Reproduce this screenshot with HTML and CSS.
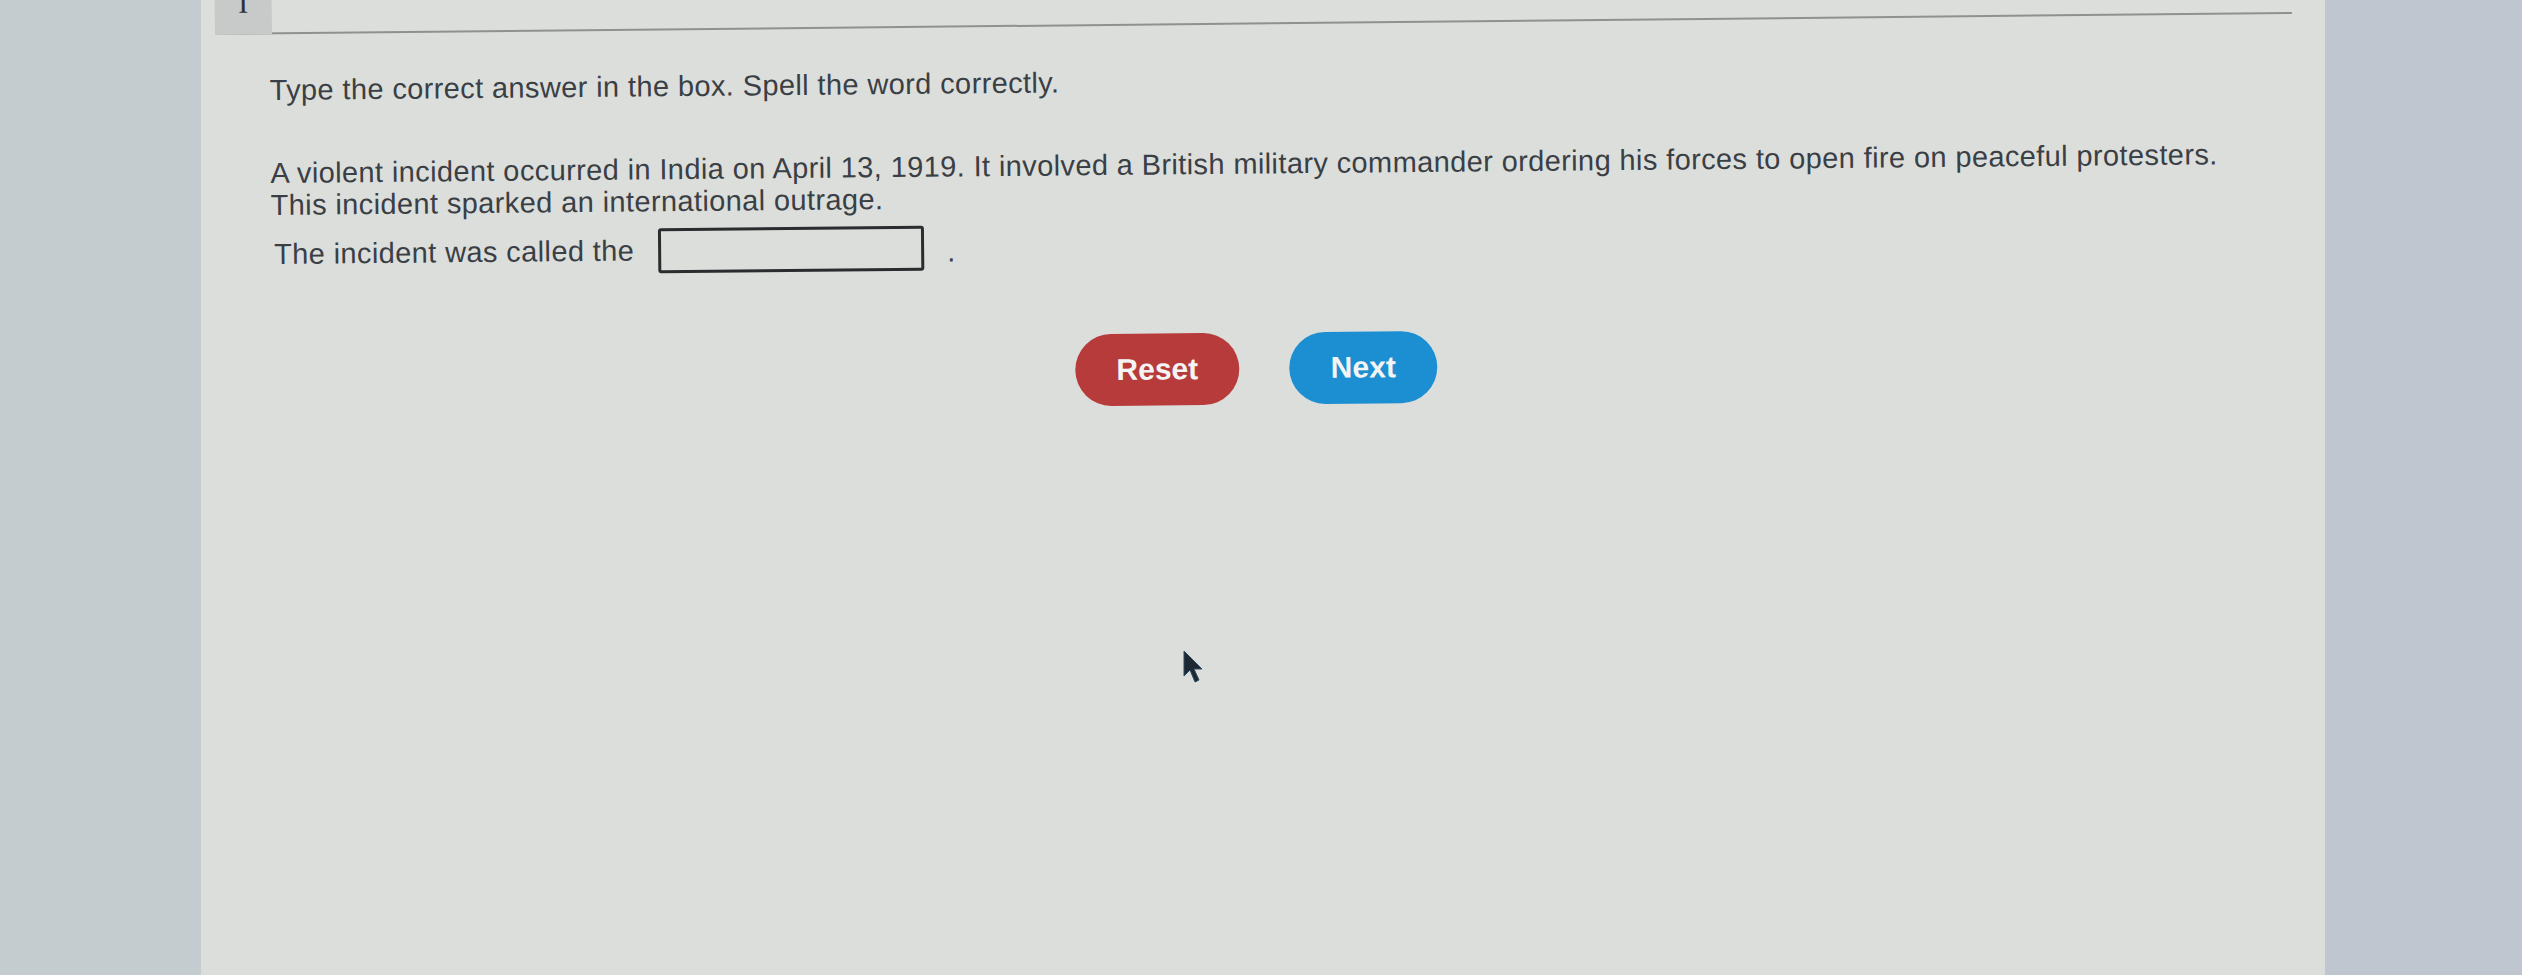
FILE: index.html
```html
<!DOCTYPE html>
<html lang="en">
<head>
<meta charset="utf-8">
<title>Question</title>
<link rel="stylesheet" href="styles.css">
</head>
<body>
<div class="screen">
  <aside class="side side-left"></aside>
  <main class="panel">
    <header class="panel-head">
      <div class="tab"><span class="tab-glyph">I</span></div>
    </header>
    <section class="content">
      <p class="instruction">Type the correct answer in the box. Spell the word correctly.</p>
      <p class="question">A violent incident occurred in India on April 13, 1919. It involved a British military commander ordering his forces to open fire on peaceful protesters. This incident sparked an international outrage.</p>
      <div class="answer-row">
        <span class="answer-label">The incident was called the</span>
        <input class="answer-box" type="text" aria-label="answer">
        <span class="answer-dot">.</span>
      </div>
      <div class="actions">
        <button class="btn btn-reset" type="button">Reset</button>
        <button class="btn btn-next" type="button">Next</button>
      </div>
    </section>
    <svg class="cursor" width="22" height="34" viewBox="0 0 22 34" aria-hidden="true">
      <polygon points="1,1 1,26 7,20 12,32 16,30 11,19 19,19" fill="#1e2833" stroke="#2f4a63" stroke-width="1"/>
    </svg>
  </main>
  <aside class="side side-right"></aside>
</div>
</body>
</html>
```
FILE: styles.css
```css
html, body {
  margin: 0;
  padding: 0;
}

body {
  width: 2522px;
  height: 975px;
  overflow: hidden;
  background: #c4cbcf;
  font-family: "Liberation Sans", Arial, sans-serif;
}

.screen {
  display: flex;
  height: 975px;
}

.side {
  flex: none;
}

.side-left {
  width: 201px;
  background: #c5ccd0;
}

.side-right {
  width: 197px;
  background: #bfc6cf;
}

.panel {
  position: relative;
  flex: 1;
  background: #dcdedb;
  display: flex;
  flex-direction: column;
}

.panel-head {
  height: 33px;
  margin: 0 33px 0 14px;
  border-bottom: 2px solid #8e918f;
  display: flex;
  transform: rotate(-0.58deg);
  transform-origin: 0 100%;
}

.tab {
  width: 57px;
  height: 35px;
  background: #c7cac8;
  overflow: hidden;
  display: flex;
  justify-content: center;
}

.tab-glyph {
  display: block;
  font-family: "Liberation Serif", "Times New Roman", serif;
  font-size: 30px;
  line-height: 1;
  margin-top: -12px;
  color: #2e3236;
}

.content {
  padding: 39px 0 0 69px;
  color: #3a3f45;
  font-size: 29px;
  line-height: 32px;
  letter-spacing: 0.38px;
  transform: rotate(-0.55deg);
  transform-origin: 69px 100px;
}

.instruction {
  margin: 0;
}

.question {
  margin: 51px 0 0 0;
  max-width: 1995px;
}

.answer-row {
  display: flex;
  align-items: flex-end;
  margin-top: 11px;
  padding-left: 3px;
}

.answer-label {
  display: block;
  margin-bottom: 7px;
}

.answer-box {
  box-sizing: border-box;
  width: 266px;
  height: 45px;
  margin: 0 0 0 24px;
  border: 3px solid #2a2c2e;
  border-radius: 3px;
  background: transparent;
  padding: 0;
}

.answer-dot {
  margin: 0 0 3px 23px;
}

.actions {
  display: flex;
  justify-content: center;
  gap: 50px;
  margin: 65px 0 0 -87px;
}

.btn {
  height: 72px;
  border: none;
  border-radius: 36px;
  color: #f4f4f4;
  font-family: "Liberation Sans", Arial, sans-serif;
  font-weight: bold;
  font-size: 30px;
  letter-spacing: 0;
  padding: 0;
}

.btn-reset {
  width: 164px;
  background: #b83b3c;
}

.btn-next {
  width: 148px;
  background: #1b8fd2;
}

.cursor {
  position: absolute;
  left: 982px;
  top: 650px;
}
```
